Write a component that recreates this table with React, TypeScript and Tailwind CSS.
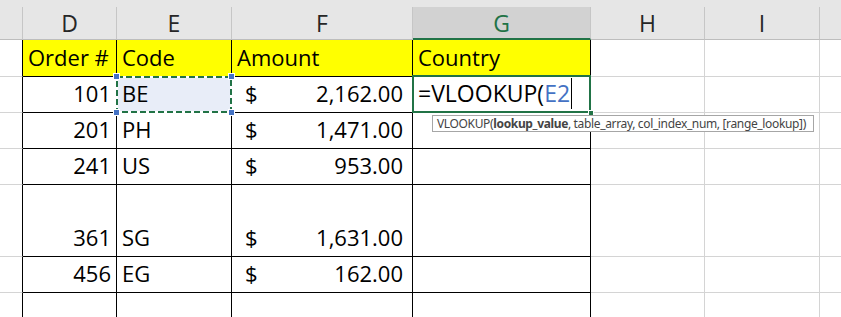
import React from 'react';

// column widths measured from the gridlines (C is only partly visible)
const COLS = ['w-[23px]', 'w-[94px]', 'w-[115px]', 'w-[181px]', 'w-[178px]', 'w-[114px]', 'w-[115px]', 'flex-1'];
const LETTERS = ['', 'D', 'E', 'F', 'G', 'H', 'I', ''];
const HEADS = ['', 'Order #', 'Code', 'Amount', 'Country'];

type Row = { h: string; order?: string; code?: string; amount?: string; head?: boolean };

const ROWS: Row[] = [
  { h: 'h-[37px]', head: true },
  { h: 'h-[36px]', order: '101', code: 'BE', amount: '2,162.00' },
  { h: 'h-[36px]', order: '201', code: 'PH', amount: '1,471.00' },
  { h: 'h-[36px]', order: '241', code: 'US', amount: '953.00' },
  { h: 'h-[72px]', order: '361', code: 'SG', amount: '1,631.00' },
  { h: 'h-[36px]', order: '456', code: 'EG', amount: '162.00' },
  { h: 'h-[36px]' },
];

const rightLine = (ci: number) =>
  ci === 7 ? '' : ci <= 4 ? 'border-r border-r-black' : 'border-r border-r-[#d4d4d4]';
const bottomLine = (ci: number) =>
  ci >= 1 && ci <= 4 ? 'border-b border-b-black' : 'border-b border-b-[#d4d4d4]';

const ColumnHeader: React.FC = () => (
  <div className="flex h-[40px] bg-[#e6e6e6] pt-[7px]">
    {COLS.map((w, ci) => {
      const active = ci === 4;
      return (
        <div
          key={ci}
          className={`${w} h-full flex items-center justify-center text-[23px] leading-none pt-[1px] ${
            ci === 7 ? '' : 'border-r border-r-[#c6c6c6]'
          } ${
            active
              ? 'bg-[#d2d2d2] text-[#217346] border-b-2 border-b-[#217346]'
              : 'text-[#262626] border-b border-b-[#bdbdbd]'
          }`}
        >
          {LETTERS[ci]}
        </div>
      );
    })}
  </div>
);

const Handle: React.FC<{ pos: string }> = ({ pos }) => (
  <span className={`absolute ${pos} w-[7px] h-[7px] bg-[#4472c4] border border-white z-20`} />
);

// copy/reference "marching ants" around E2
const RefOutline: React.FC = () => (
  <svg className="absolute -left-px -top-px w-[116px] h-[37px] z-10" viewBox="0 0 116 37">
    <rect x="1" y="1" width="114" height="35" fill="none" stroke="#ffffff" strokeWidth="2" />
    <rect x="1" y="1" width="114" height="35" fill="none" stroke="#217346" strokeWidth="2" strokeDasharray="6 3" />
  </svg>
);

const FormulaCell: React.FC = () => (
  <>
    <span className="relative pl-[5px] text-[23px] whitespace-nowrap">
      =VLOOKUP(<span className="text-[#4472c4]">E2</span>
      <span className="absolute -right-[2px] bottom-[1px] w-px h-[31px] bg-black" />
    </span>
    {/* active cell frame + fill handle */}
    <span className="absolute -left-px -top-[2px] -right-px -bottom-px border-2 border-[#217346] z-10" />
    <span className="absolute -right-[4px] -bottom-[4px] w-[6px] h-[6px] bg-[#217346] border border-white z-20" />
    {/* function tooltip */}
    <div className="absolute left-[19px] top-[38px] h-[17px] w-[382px] bg-white border border-[#a6a6a6] z-30 flex items-center pl-[4px] text-[12px] leading-none text-[#444] font-['Noto_Sans',sans-serif] tracking-[-0.35px] whitespace-nowrap">
      VLOOKUP(<b className="font-bold">lookup_value</b>, table_array, col_index_num, [range_lookup])
    </div>
  </>
);

const DataRow: React.FC<{ row: Row; ri: number }> = ({ row, ri }) => (
  <div className={`flex ${row.h}`}>
    {COLS.map((w, ci) => {
      const yellow = row.head && ci >= 1 && ci <= 4;
      const refCell = ri === 1 && ci === 2;
      const formula = ri === 1 && ci === 4;
      let content: React.ReactNode = null;
      if (row.head && HEADS[ci]) {
        content = <span className="pl-[5px] whitespace-nowrap">{HEADS[ci]}</span>;
      } else if (row.order) {
        if (ci === 1) content = <span className="ml-auto pr-[5px]">{row.order}</span>;
        if (ci === 2) content = <span className="pl-[5px]">{row.code}</span>;
        if (ci === 3)
          content = (
            <>
              <span className="pl-[13px]">$</span>
              <span className="ml-auto pr-[9px]">{row.amount}</span>
            </>
          );
      }
      if (formula) content = <FormulaCell />;
      return (
        <div
          key={ci}
          className={`${w} relative flex items-end pb-[2px] ${rightLine(ci)} ${bottomLine(ci)} ${
            yellow ? 'bg-[#ffff00]' : refCell ? 'bg-[#e8edf8]' : 'bg-white'
          }`}
        >
          {content}
          {refCell && (
            <>
              <RefOutline />
              <Handle pos="-left-[4px] -top-[4px]" />
              <Handle pos="-right-[4px] -top-[4px]" />
              <Handle pos="-left-[4px] -bottom-[4px]" />
              <Handle pos="-right-[4px] -bottom-[4px]" />
            </>
          )}
        </div>
      );
    })}
  </div>
);

const App: React.FC = () => (
  <div className="w-[841px] h-[317px] overflow-hidden bg-white text-black text-[22px] leading-normal font-['Open_Sans',sans-serif]">
    <ColumnHeader />
    {ROWS.map((row, ri) => (
      <DataRow key={ri} row={row} ri={ri} />
    ))}
  </div>
);

export default App;
